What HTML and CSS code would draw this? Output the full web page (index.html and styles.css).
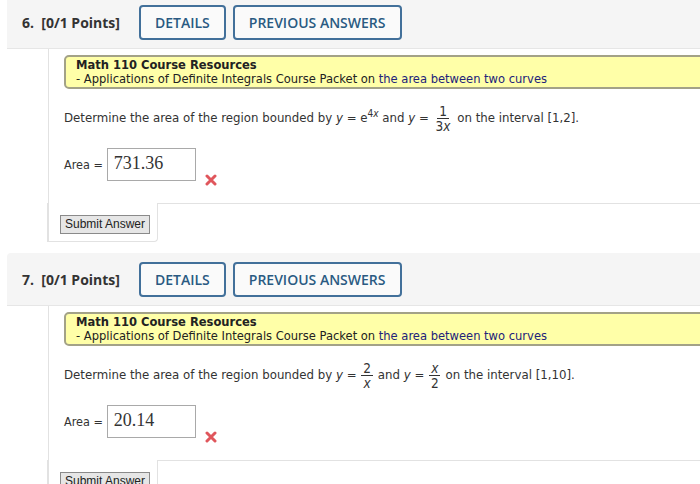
FILE: index.html
```html
<!DOCTYPE html>
<html>
<head>
<meta charset="utf-8">
<link rel="stylesheet" href="styles.css">
</head>
<body>
<div class="page">
  <section class="q q-first">
    <div class="qhead">
      <span class="qtitle">6.&nbsp; [0/1 Points]</span>
      <span class="btn">DETAILS</span>
      <span class="btn">PREVIOUS ANSWERS</span>
    </div>
    <div class="qbody">
      <div class="resources">
        <div class="res-title">Math 110 Course Resources</div>
        <div class="res-line">- Applications of Definite Integrals Course Packet on <span class="link">the area between two curves</span></div>
      </div>
      <p class="question">Determine the area of the region bounded by <i>y</i> = e<sup>4<i>x</i></sup> and <i>y</i> = <span class="frac"><span class="num">1</span><span class="den">3<i>x</i></span></span> on the interval [1,2].</p>
      <div class="answer">
        <span class="label">Area =</span>
        <span class="input">731.36</span>
        <svg class="wrong" width="12" height="12" viewBox="0 0 12 12"><path d="M2 2 L10 10 M10 2 L2 10" stroke="#e0565c" stroke-width="3" stroke-linecap="round"/></svg>
      </div>
      <div class="submit-row">
        <div class="submit-cell"><span class="submit">Submit Answer</span></div>
        <div class="submit-rest"></div>
      </div>
    </div>
  </section>
  <section class="q">
    <div class="qhead">
      <span class="qtitle">7.&nbsp; [0/1 Points]</span>
      <span class="btn">DETAILS</span>
      <span class="btn">PREVIOUS ANSWERS</span>
    </div>
    <div class="qbody">
      <div class="resources">
        <div class="res-title">Math 110 Course Resources</div>
        <div class="res-line">- Applications of Definite Integrals Course Packet on <span class="link">the area between two curves</span></div>
      </div>
      <p class="question">Determine the area of the region bounded by <i>y</i> = <span class="frac"><span class="num">2</span><span class="den"><i>x</i></span></span> and <i>y</i> = <span class="frac"><span class="num"><i>x</i></span><span class="den">2</span></span> on the interval [1,10].</p>
      <div class="answer">
        <span class="label">Area =</span>
        <span class="input">20.14</span>
        <svg class="wrong" width="12" height="12" viewBox="0 0 12 12"><path d="M2 2 L10 10 M10 2 L2 10" stroke="#e0565c" stroke-width="3" stroke-linecap="round"/></svg>
      </div>
      <div class="submit-row">
        <div class="submit-cell"><span class="submit">Submit Answer</span></div>
        <div class="submit-rest"></div>
      </div>
    </div>
  </section>
</div>
</body>
</html>
```

FILE: styles.css
```css
html, body {
  margin: 0;
  padding: 0;
  background: #ffffff;
  overflow: hidden;
}
.page {
  width: 700px;
  height: 484px;
  overflow: hidden;
}
.q-first {
  margin-top: -4px;
}
.q {
  margin-bottom: 11px;
}
.qhead {
  margin-left: 7px;
  height: 52px;
  background: #f5f5f5;
  border-bottom: 1px solid #e6e6e6;
  border-radius: 4px 0 0 0;
  display: flex;
  align-items: center;
  padding-left: 15px;
  font-family: "Open Sans", sans-serif;
}
.qtitle {
  font-weight: 700;
  font-size: 14px;
  color: #333333;
  margin-right: 19px;
}
.btn {
  box-sizing: border-box;
  height: 35px;
  display: inline-flex;
  align-items: center;
  padding: 0 14px;
  margin-right: 7px;
  border: 2px solid #42709a;
  border-radius: 4px;
  background: #fafafa;
  color: #2a5a82;
  font-size: 14px;
  font-weight: 600;
}
.qbody {
  margin-left: 48px;
  border-left: 1px solid #e2e2e2;
  padding: 6px 0 0 15px;
  font-family: "DejaVu Sans Condensed", "DejaVu Sans", sans-serif;
  font-stretch: semi-condensed;
  color: #333333;
}
.resources {
  margin-right: -20px;
  background: #ffffa8;
  border: 2px solid #a3a287;
  border-radius: 5px 0 0 5px;
  padding: 1px 10px 1px 10px;
  font-size: 12.8px;
  line-height: 14px;
  color: #222222;
}
.res-title {
  font-weight: 700;
}
.link {
  color: #22237a;
}
.question {
  margin: 14px 0 0 0;
  font-size: 13.1px;
  line-height: 30px;
}
.question sup {
  font-size: 10px;
  line-height: 0;
}
.frac {
  display: inline-flex;
  flex-direction: column;
  align-items: center;
  vertical-align: middle;
  line-height: 14px;
  margin: 0 1px;
  font-size: 13.5px;
}
.num {
  padding: 0 2px;
  border-bottom: 1px solid #333333;
}
.den {
  padding: 0 2px;
}
.answer {
  display: flex;
  align-items: flex-start;
  margin-top: 15px;
  height: 40px;
}
.label {
  font-size: 12.5px;
  margin-top: 9px;
  margin-right: 4px;
  white-space: nowrap;
}
.input {
  box-sizing: border-box;
  width: 89px;
  height: 33px;
  border: 1px solid #a9a9a9;
  font-family: "Liberation Serif", serif;
  font-size: 18px;
  color: #333333;
  padding: 4px 0 0 6px;
}
.wrong {
  margin-left: 9px;
  margin-top: 26px;
}
.submit-row {
  display: flex;
  margin-top: 15px;
  margin-left: -16px;
}
.submit-cell {
  width: 111px;
  box-sizing: border-box;
  padding: 10px 0 7px 12px;
  border-right: 1px solid #e2e2e2;
  border-bottom: 1px solid #e2e2e2;
  border-left: 1px solid #e2e2e2;
  border-bottom-right-radius: 4px;
  margin-left: -1px;
}
.submit {
  display: inline-block;
  box-sizing: border-box;
  height: 19px;
  padding: 0 4px;
  background: #e6e6e6;
  border: 1px solid #8a8a8a;
  font-family: "Liberation Sans", sans-serif;
  font-size: 12px;
  line-height: 17px;
  color: #222222;
}
.submit-rest {
  flex: 1;
  border-top: 1px solid #e2e2e2;
}
```
